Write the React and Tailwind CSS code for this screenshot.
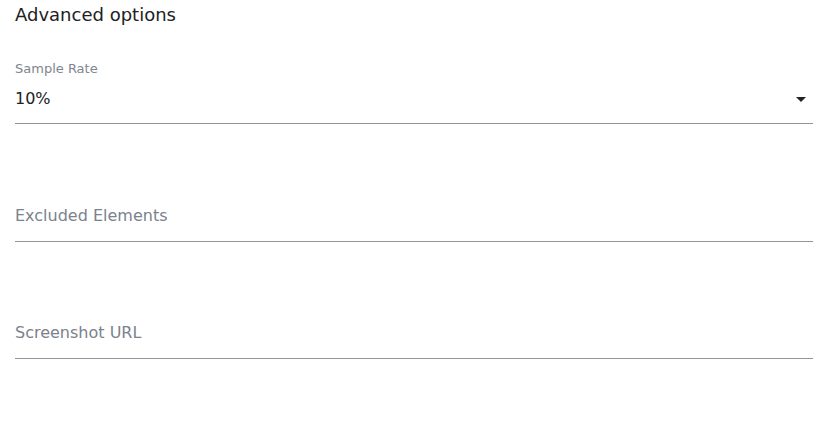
import React from "react";

const font = { fontFamily: '"DejaVu Sans", Verdana, sans-serif' };

export default function App() {
  return (
    <div className="w-[825px] h-[426px] bg-white overflow-hidden" style={font}>
      <div className="ml-[15px] w-[798px]">
        <h2 className="text-[18px] leading-[29px] h-[29px] text-[#212121] font-normal">
          Advanced options
        </h2>

        {/* Sample Rate select */}
        <div className="mt-[33px]">
          <div className="text-[13px] leading-[13px] h-[13px] text-[#80868e]">Sample Rate</div>
          <div className="mt-[14px] flex items-start justify-between border-b border-[#949494] pb-[15px]">
            <span className="text-[16px] leading-[19px] h-[19px] text-[#212121]">10%</span>
            <svg
              viewBox="0 0 24 24"
              className="w-6 h-6 -mt-[2px] -mb-[3px] fill-[#222222]"
            >
              <path d="M7 10l5 5 5-5z" />
            </svg>
          </div>
        </div>

        {/* Excluded Elements */}
        <div className="mt-[82px] border-b border-[#949494] pb-[16px]">
          <div className="text-[16px] leading-[19px] h-[19px] text-[#7a828c]">Excluded Elements</div>
        </div>

        {/* Screenshot URL */}
        <div className="mt-[81px] border-b border-[#949494] pb-[16px]">
          <div className="text-[16px] leading-[19px] h-[19px] text-[#7a828c]">Screenshot URL</div>
        </div>
      </div>
    </div>
  );
}
